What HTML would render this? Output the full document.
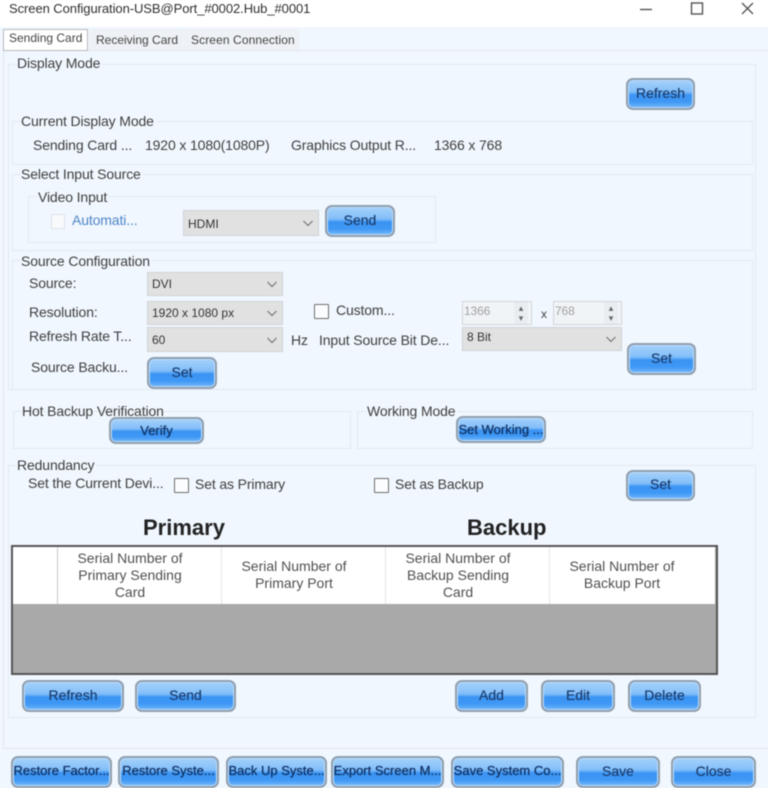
<!DOCTYPE html>
<html><head><meta charset="utf-8"><style>
html,body{margin:0;padding:0}
body{width:768px;height:788px;overflow:hidden;position:relative;background:#f0f7fe;font-family:"Liberation Sans",sans-serif;font-size:14px;color:#3f3f3f}
div,span{position:absolute;box-sizing:border-box}
#w{left:0;top:0;width:768px;height:788px;filter:blur(.5px)}
.t{white-space:nowrap;line-height:16px;letter-spacing:-.13px}
.g{border:1px solid #e3e9ef}
.b{border:2px solid #909fb0;border-radius:7px;padding-bottom:3px;background:linear-gradient(#a5d1fb 0,#83bff9 42%,#3a94f3 54%,#3f98f5 78%,#74b9fa 100%);box-shadow:inset 0 0 0 1px #b9dbfb;color:#153768;text-align:center;white-space:nowrap;overflow:hidden;display:flex;align-items:center;justify-content:center;font-size:14px;text-shadow:0 0 1px #4f83c0}
.n{font-size:13px;color:#0f2f60;text-shadow:0 0 1px #1f4f90}
.s{background:#e1e1e1;border:1px solid #cfd3d7;font-size:12px;color:#333}
.s span{left:4px;top:50%;margin-top:-8px;line-height:16px;white-space:nowrap}
.s svg{position:absolute;right:4px;top:50%;margin-top:-4px}
.c{background:#fbfcfd;border:1.5px solid #6e6e6e;border-radius:1px}
.h{text-align:center;font-size:14px;line-height:17px;color:#505050;top:550px}
.a{width:14px;height:22px;background:#e9edf1;font-size:9px;line-height:10px;color:#666;text-align:center;padding-top:1px}
</style></head><body><div id="w">
<div style="left:0;top:0;width:768px;height:27px;background:#fff"></div>
<span class="t" style="left:9px;top:1px;font-size:13px;letter-spacing:-.07px;color:#2f2f2f">Screen Configuration-USB@Port_#0002.Hub_#0001</span>
<svg style="position:absolute;left:630px;top:0" width="130" height="18" fill="none" stroke="#555" stroke-width="1.4"><path d="M10 9.500H22"/><rect x="61.500" y="3" width="11" height="11"/><path d="M112 3L123 14M123 3L112 14"/></svg>

<!-- tab pane -->
<div style="left:3px;top:50px;width:780px;height:699px;border:1px solid #e3e7ec"></div>
<div style="left:3px;top:29px;width:85px;height:22px;background:#fff;border:1px solid #b5b9be"></div>
<span class="t" style="left:9px;top:30px;font-size:12px;letter-spacing:0;color:#444">Sending Card</span>
<div style="left:90px;top:29px;width:93px;height:21px;background:#eef1f5"></div>
<span class="t" style="left:96px;top:32px;font-size:12px;letter-spacing:0;color:#444">Receiving Card</span>
<div style="left:184px;top:29px;width:115px;height:21px;background:#eef1f5"></div>
<span class="t" style="left:191px;top:32px;font-size:12px;letter-spacing:.1px;color:#444">Screen Connection</span>

<!-- groups -->
<div class="g" style="left:8px;top:64px;width:748px;height:326px"></div>
<div class="g" style="left:12px;top:121px;width:741px;height:44px"></div>
<div class="g" style="left:12px;top:174px;width:741px;height:77px"></div>
<div class="g" style="left:28px;top:196px;width:408px;height:47px"></div>
<div class="g" style="left:12px;top:260px;width:741px;height:130px"></div>
<div class="g" style="left:13px;top:411px;width:338px;height:38px"></div>
<div class="g" style="left:357px;top:411px;width:396px;height:38px"></div>
<div class="g" style="left:8px;top:465px;width:748px;height:253px"></div>

<span class="t" style="left:17px;top:55px;background:#f0f7fe;padding-right:2px">Display Mode</span>
<span class="t" style="left:21px;top:113px;background:#f0f7fe;padding-right:2px">Current Display Mode</span>
<span class="t" style="left:33px;top:137px">Sending Card ...</span>
<span class="t" style="left:145px;top:137px">1920 x 1080(1080P)</span>
<span class="t" style="left:291px;top:137px">Graphics Output R...</span>
<span class="t" style="left:434px;top:137px">1366 x 768</span>
<span class="t" style="left:21px;top:166px;background:#f0f7fe;padding-right:2px">Select Input Source</span>
<span class="t" style="left:38px;top:189px;background:#f0f7fe;padding-right:2px">Video Input</span>
<div class="c" style="left:51px;top:214px;width:14px;height:15px;border:1px solid #dfe3e7;background:#f8fafc"></div>
<span class="t" style="left:72px;top:212px;color:#4f86c6">Automati...</span>
<div class="s" style="left:183px;top:210px;width:136px;height:26px"><span style="top:55%">HDMI</span><svg width="12" height="8" fill="none" stroke="#777" stroke-width="1.2"><path d="M1.500 2L6 6.500L10.500 2"/></svg></div>
<div class="b" style="left:325px;top:205px;width:70px;height:32px">Send</div>
<div class="b" style="left:626px;top:78px;width:69px;height:32px">Refresh</div>

<span class="t" style="left:21px;top:253px;background:#f0f7fe;padding-right:2px">Source Configuration</span>
<span class="t" style="left:29px;top:275px">Source:</span>
<div class="s" style="left:147px;top:272px;width:136px;height:24px"><span>DVI</span><svg width="12" height="8" fill="none" stroke="#777" stroke-width="1.2"><path d="M1.500 2L6 6.500L10.500 2"/></svg></div>
<span class="t" style="left:29px;top:304px">Resolution:</span>
<div class="s" style="left:147px;top:301px;width:136px;height:24px"><span>1920 x 1080 px</span><svg width="12" height="8" fill="none" stroke="#777" stroke-width="1.2"><path d="M1.500 2L6 6.500L10.500 2"/></svg></div>
<span class="t" style="left:29px;top:328px">Refresh Rate T...</span>
<div class="s" style="left:147px;top:327px;width:136px;height:25px"><span>60</span><svg width="12" height="8" fill="none" stroke="#777" stroke-width="1.2"><path d="M1.500 2L6 6.500L10.500 2"/></svg></div>
<span class="t" style="left:291px;top:332px">Hz</span>
<span class="t" style="left:319px;top:332px">Input Source Bit De...</span>
<div class="c" style="left:314px;top:304px;width:15px;height:15px"></div>
<span class="t" style="left:336px;top:302px">Custom...</span>
<div style="left:462px;top:301px;width:70px;height:24px;background:#f1f4f7;border:1px solid #d3d6da"></div>
<span class="t" style="left:464px;top:303px;font-size:12px;color:#a0a0a0">1366</span>
<div class="a" style="left:514px;top:302px">▴<br>▾</div>
<span class="t" style="left:541px;top:306px;font-size:12px;color:#444">x</span>
<div style="left:553px;top:301px;width:69px;height:24px;background:#f1f4f7;border:1px solid #d3d6da"></div>
<span class="t" style="left:555px;top:303px;font-size:12px;color:#a0a0a0">768</span>
<div class="a" style="left:604px;top:302px">▴<br>▾</div>
<div class="s" style="left:462px;top:327px;width:160px;height:24px"><span style="top:42%">8 Bit</span><svg width="12" height="8" fill="none" stroke="#777" stroke-width="1.2"><path d="M1.500 2L6 6.500L10.500 2"/></svg></div>
<span class="t" style="left:31px;top:359px">Source Backu...</span>
<div class="b" style="left:147px;top:357px;width:70px;height:32px">Set</div>
<div class="b" style="left:627px;top:343px;width:69px;height:32px">Set</div>

<span class="t" style="left:22px;top:403px">Hot Backup Verification</span>
<div class="b n" style="left:109px;top:417px;width:95px;height:27px;padding-bottom:1px">Verify</div>
<span class="t" style="left:367px;top:403px;background:#f0f7fe;padding-right:2px">Working Mode</span>
<div class="b n" style="left:456px;top:416px;width:90px;height:27px;padding-bottom:1px">Set Working ...</div>

<span class="t" style="left:17px;top:457px;background:#f0f7fe;padding-right:2px">Redundancy</span>
<span class="t" style="left:28px;top:475px">Set the Current Devi...</span>
<div class="c" style="left:174px;top:478px;width:15px;height:15px"></div>
<span class="t" style="left:195px;top:476px">Set as Primary</span>
<div class="c" style="left:374px;top:478px;width:15px;height:15px"></div>
<span class="t" style="left:395px;top:476px">Set as Backup</span>
<div class="b" style="left:626px;top:470px;width:69px;height:31px">Set</div>

<span class="t" style="left:143px;top:515px;font-size:22px;line-height:25px;letter-spacing:0;font-weight:bold;color:#222">Primary</span>
<span class="t" style="left:467px;top:515px;font-size:22px;line-height:25px;letter-spacing:0;font-weight:bold;color:#222">Backup</span>

<div style="left:11px;top:545px;width:707px;height:130px;border:2px solid #555;background:#a9a9a9"></div>
<div style="left:13px;top:547px;width:702px;height:57px;background:#fff"></div>
<div style="left:57px;top:547px;width:1px;height:57px;background:#c9c9c9"></div>
<div style="left:221px;top:547px;width:1px;height:57px;background:#e4e4e4"></div>
<div style="left:385px;top:547px;width:1px;height:57px;background:#e4e4e4"></div>
<div style="left:549px;top:547px;width:1px;height:57px;background:#e4e4e4"></div>
<div class="h" style="left:58px;width:144px">Serial Number of<br>Primary Sending<br>Card</div>
<div class="h" style="left:222px;width:144px;top:558px">Serial Number of<br>Primary Port</div>
<div class="h" style="left:386px;width:144px">Serial Number of<br>Backup Sending<br>Card</div>
<div class="h" style="left:550px;width:144px;top:558px">Serial Number of<br>Backup Port</div>

<div class="b" style="left:22px;top:680px;width:102px;height:32px">Refresh</div>
<div class="b" style="left:135px;top:680px;width:101px;height:32px">Send</div>
<div class="b" style="left:455px;top:680px;width:73px;height:32px">Add</div>
<div class="b" style="left:541px;top:680px;width:74px;height:32px">Edit</div>
<div class="b" style="left:628px;top:680px;width:73px;height:32px">Delete</div>

<div class="b n" style="left:11px;top:756px;width:101px;height:32px">Restore Factor...</div>
<div class="b n" style="left:118px;top:756px;width:101px;height:32px">Restore Syste...</div>
<div class="b n" style="left:226px;top:756px;width:101px;height:32px">Back Up Syste...</div>
<div class="b n" style="left:331px;top:756px;width:113px;height:32px">Export Screen M...</div>
<div class="b n" style="left:451px;top:756px;width:113px;height:32px">Save System Co...</div>
<div class="b" style="left:576px;top:756px;width:84px;height:32px">Save</div>
<div class="b" style="left:671px;top:756px;width:85px;height:32px">Close</div>
</div></body></html>
